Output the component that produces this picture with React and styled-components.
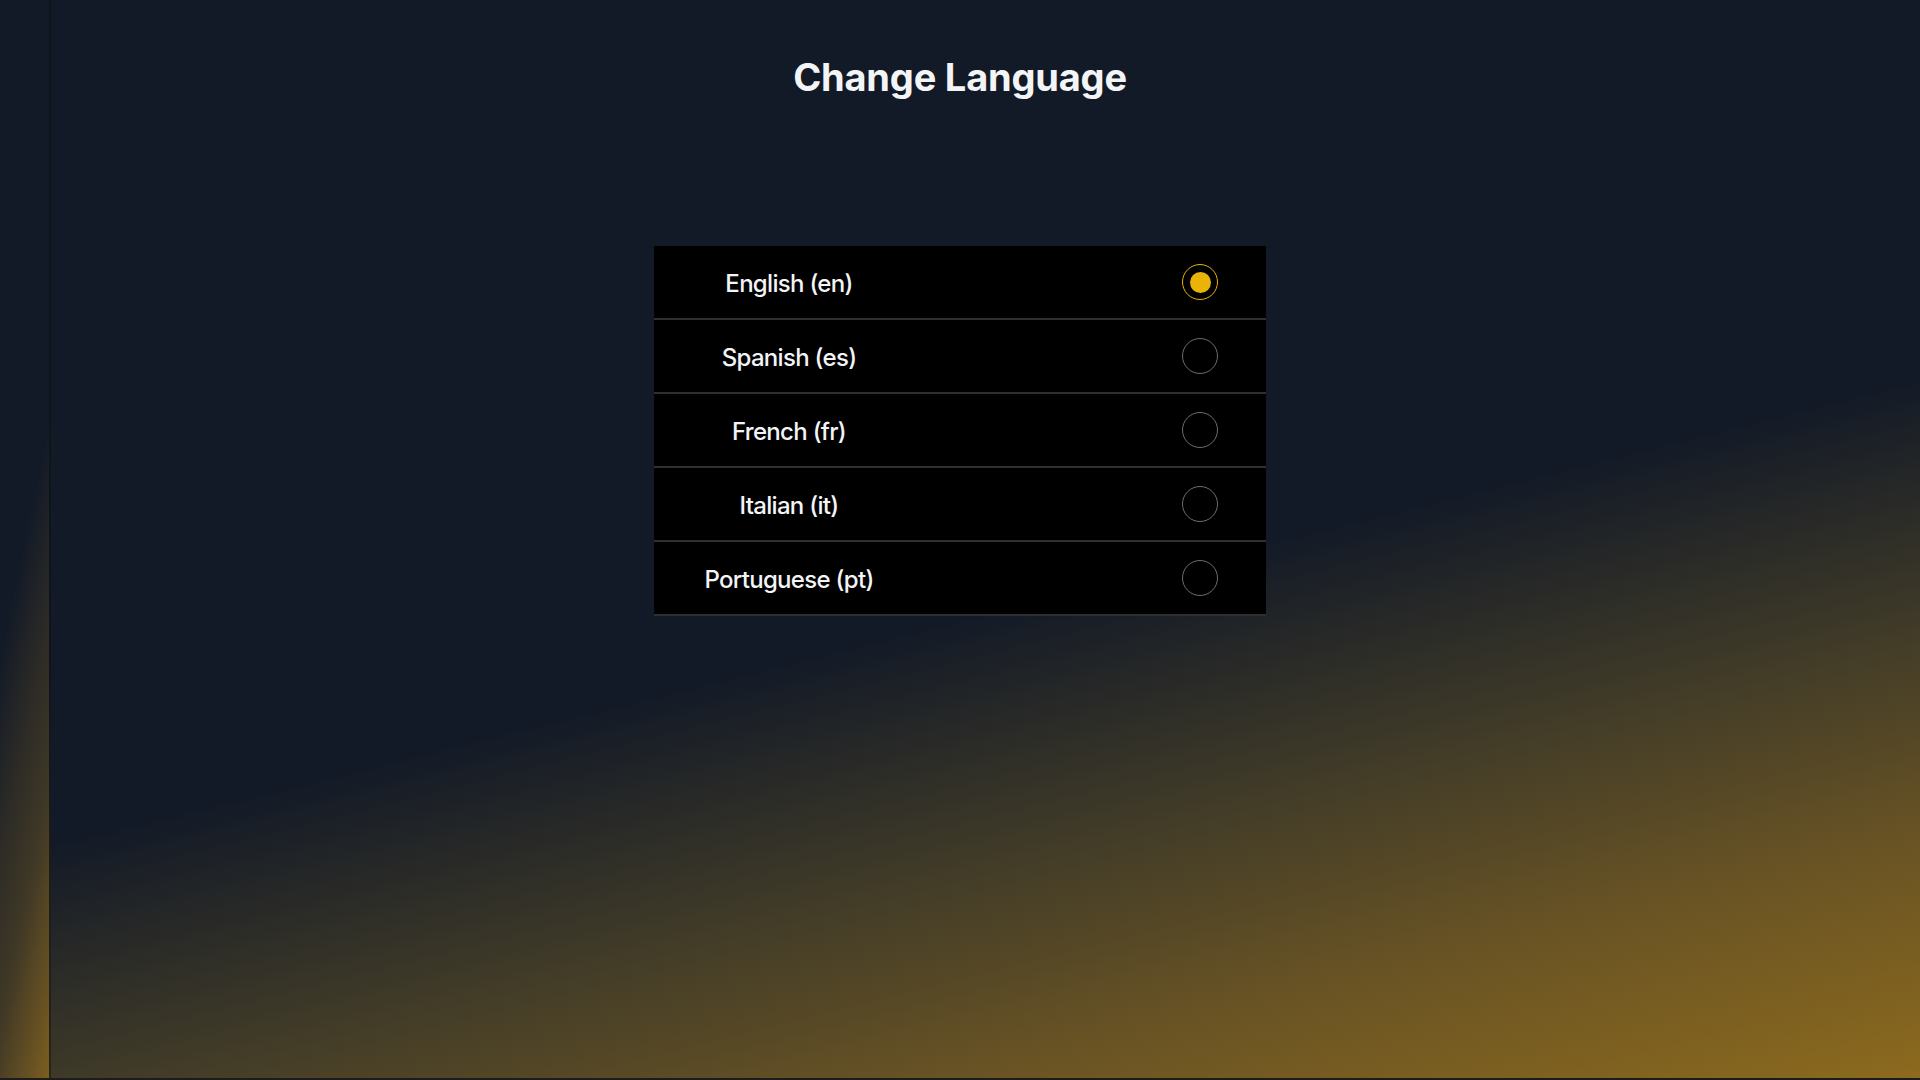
import React, { useState } from "react";
import styled, { createGlobalStyle } from "styled-components";

const GlobalStyle = createGlobalStyle`
  html, body {
    margin: 0;
    padding: 0;
    background: #131a27;
  }
  body {
    font-family: Inter, "Noto Sans", "Liberation Sans", sans-serif;
    -webkit-font-smoothing: antialiased;
  }
  * { box-sizing: border-box; }
`;

const Screen = styled.main`
  position: relative;
  height: 100vh;
  overflow: hidden;
  display: flex;
  flex-direction: column;
  align-items: center;
  border-bottom: 2px solid #1c1c1c;
  background: linear-gradient(
    166deg,
    #131a27 0%,
    #131a27 55%,
    #3f3a28 70.5%,
    #6a5424 85%,
    #8c6a1e 100%
  );
`;

const EdgeStrip = styled.aside`
  position: absolute;
  left: 0;
  top: 0;
  bottom: 0;
  width: 51px;
  border-right: 2px solid rgba(12, 14, 16, 0.55);
  background: linear-gradient(
    102deg,
    #131a27 0%,
    #131a27 50%,
    #2e2c26 66%,
    #3f3826 78%,
    #7c5e20 100%
  );
`;

const Title = styled.h1`
  margin: 58px 0 0;
  font-size: 38px;
  line-height: 1;
  font-weight: 700;
  color: #f3f4f6;
  letter-spacing: -0.2px;
`;

const List = styled.ul`
  list-style: none;
  margin: 150px 0 0;
  padding: 0;
  width: 612px;
  background: #000;
`;

const Row = styled.li`
  display: flex;
  align-items: center;
  height: 74px;
  padding-top: 2px;
  padding-right: 48px;
  border-bottom: 2px solid #2d3033;
  cursor: pointer;
`;

const Label = styled.span`
  width: 270px;
  text-align: center;
  font-size: 24px;
  font-weight: 500;
  letter-spacing: -0.7px;
  color: #f3f4f6;
`;

const Radio = styled.span`
  margin-left: auto;
  margin-top: -2px;
  width: 36px;
  height: 36px;
  border-radius: 50%;
  border: 1.5px solid ${(p) => (p.$checked ? "#eab308" : "#6b6f75")};
  display: flex;
  align-items: center;
  justify-content: center;
`;

const Dot = styled.span`
  width: 21px;
  height: 21px;
  border-radius: 50%;
  background: #eab308;
`;

const languages = [
  { code: "en", name: "English" },
  { code: "es", name: "Spanish" },
  { code: "fr", name: "French" },
  { code: "it", name: "Italian" },
  { code: "pt", name: "Portuguese" },
];

export default function App() {
  const [selected, setSelected] = useState("en");
  return (
    <>
      <GlobalStyle />
      <Screen>
        <EdgeStrip />
        <Title>Change Language</Title>
        <List>
          {languages.map((l) => (
            <Row key={l.code} onClick={() => setSelected(l.code)}>
              <Label>
                {l.name} ({l.code})
              </Label>
              <Radio $checked={selected === l.code}>
                {selected === l.code && <Dot />}
              </Radio>
            </Row>
          ))}
        </List>
      </Screen>
    </>
  );
}
